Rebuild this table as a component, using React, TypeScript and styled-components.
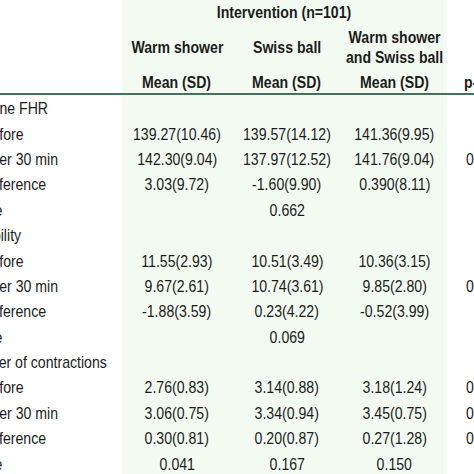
import React from "react";
import styled, { createGlobalStyle } from "styled-components";

const Global = createGlobalStyle`
  html, body { margin: 0; padding: 0; background: #ffffff; overflow: hidden; }
  body { width: 474px; height: 474px; }
`;

const Viewport = styled.div`
  width: 474px;
  height: 474px;
  overflow: hidden;
  background: #ffffff;
  font-family: "Liberation Sans", Arial, sans-serif;
  font-size: 17px;
  color: #1c1c1c;
`;

const Table = styled.div`
  margin-left: -44px;
  display: grid;
  grid-template-columns: 166px 110px 110px 105px 120px;
  grid-template-rows: 25px 45px 23px 3.5px repeat(16, 25.4px);
`;

const Cell = styled.div<{ $shade?: boolean; $bold?: boolean; $align?: "left" | "center"; $indent?: number; $valign?: "center" | "end" }>`
  display: flex;
  align-items: ${(p) => (p.$valign === "end" ? "flex-end" : "center")};
  justify-content: ${(p) => (p.$align === "left" ? "flex-start" : "center")};
  text-align: ${(p) => (p.$align === "left" ? "left" : "center")};
  padding-left: ${(p) => p.$indent ?? 0}px;
  background: ${(p) => (p.$shade ? "#f3faf2" : "transparent")};
  font-weight: ${(p) => (p.$bold ? 700 : 400)};
  line-height: 20px;
  white-space: nowrap;
  min-width: 0;
`;

const SpanCell = styled(Cell)<{ $span: number }>`
  grid-column: span ${(p) => p.$span};
`;

/* condensed face: the reference uses a narrow grotesque */
const Narrow = styled.span<{ $origin?: "left" | "center" }>`
  display: inline-block;
  transform: scaleX(0.83);
  transform-origin: ${(p) => (p.$origin === "left" ? "left center" : "center center")};
`;

const RuleRow = styled.div`
  grid-column: 1 / -1;
  display: flex;
  flex-direction: column;
`;

const Rule = styled.div`
  height: 2px;
  background: #46705f;
`;

const RuleGap = styled.div<{ $shade?: boolean }>`
  flex: 1;
  display: grid;
  grid-template-columns: 166px 325px 1fr;
`;

const GapPart = styled.div<{ $shade?: boolean }>`
  background: ${(p) => (p.$shade ? "#f3faf2" : "transparent")};
`;

type Kind = "main" | "sub" | "p";
type Row = { label: string; kind: Kind; vals: [string, string, string]; p: string };

const indentFor: Record<Kind, number> = { main: 5, sub: 26, p: 0 };

const rows: Row[] = [
  { label: "Baseline FHR", kind: "main", vals: ["", "", ""], p: "" },
  { label: "Before", kind: "sub", vals: ["139.27(10.46)", "139.57(14.12)", "141.36(9.95)"], p: "" },
  { label: "After 30 min", kind: "sub", vals: ["142.30(9.04)", "137.97(12.52)", "141.76(9.04)"], p: "0.062" },
  { label: "Difference", kind: "sub", vals: ["3.03(9.72)", "-1.60(9.90)", "0.390(8.11)"], p: "" },
  { label: "p-value", kind: "p", vals: ["", "0.662", ""], p: "" },
  { label: "Variability", kind: "main", vals: ["", "", ""], p: "" },
  { label: "Before", kind: "sub", vals: ["11.55(2.93)", "10.51(3.49)", "10.36(3.15)"], p: "" },
  { label: "After 30 min", kind: "sub", vals: ["9.67(2.61)", "10.74(3.61)", "9.85(2.80)"], p: "0.041" },
  { label: "Difference", kind: "sub", vals: ["-1.88(3.59)", "0.23(4.22)", "-0.52(3.99)"], p: "" },
  { label: "p-value", kind: "p", vals: ["", "0.069", ""], p: "" },
  { label: "Number of contractions", kind: "main", vals: ["", "", ""], p: "" },
  { label: "Before", kind: "sub", vals: ["2.76(0.83)", "3.14(0.88)", "3.18(1.24)"], p: "0.029" },
  { label: "After 30 min", kind: "sub", vals: ["3.06(0.75)", "3.34(0.94)", "3.45(0.75)"], p: "0.031" },
  { label: "Difference", kind: "sub", vals: ["0.30(0.81)", "0.20(0.87)", "0.27(1.28)"], p: "0.082" },
  { label: "p-value", kind: "p", vals: ["0.041", "0.167", "0.150"], p: "" },
  { label: "", kind: "main", vals: ["", "", ""], p: "" },
];

export default function App() {
  return (
    <Viewport>
      <Global />
      <Table>
        <Cell />
        <SpanCell $span={3} $shade $bold><Narrow>Intervention (n=101)</Narrow></SpanCell>
        <Cell />

        <Cell />
        <Cell $shade $bold><Narrow>Warm shower</Narrow></Cell>
        <Cell $shade $bold><Narrow>Swiss ball</Narrow></Cell>
        <Cell $shade $bold><Narrow>Warm shower<br />and Swiss ball</Narrow></Cell>
        <Cell />

        <Cell />
        <Cell $shade $bold $valign="end"><Narrow>Mean (SD)</Narrow></Cell>
        <Cell $shade $bold $valign="end"><Narrow>Mean (SD)</Narrow></Cell>
        <Cell $shade $bold $valign="end"><Narrow>Mean (SD)</Narrow></Cell>
        <Cell $bold $valign="end" $align="left" $indent={17}><Narrow $origin="left">p-value</Narrow></Cell>

        <RuleRow>
          <Rule />
          <RuleGap>
            <GapPart />
            <GapPart $shade />
            <GapPart />
          </RuleGap>
        </RuleRow>

        {rows.map((r, i) => (
          <React.Fragment key={i}>
            <Cell $align="left" $indent={indentFor[r.kind]}><Narrow $origin="left">{r.label}</Narrow></Cell>
            <Cell $shade><Narrow>{r.vals[0]}</Narrow></Cell>
            <Cell $shade><Narrow>{r.vals[1]}</Narrow></Cell>
            <Cell $shade><Narrow>{r.vals[2]}</Narrow></Cell>
            <Cell $align="left" $indent={19}><Narrow $origin="left">{r.p}</Narrow></Cell>
          </React.Fragment>
        ))}
      </Table>
    </Viewport>
  );
}
